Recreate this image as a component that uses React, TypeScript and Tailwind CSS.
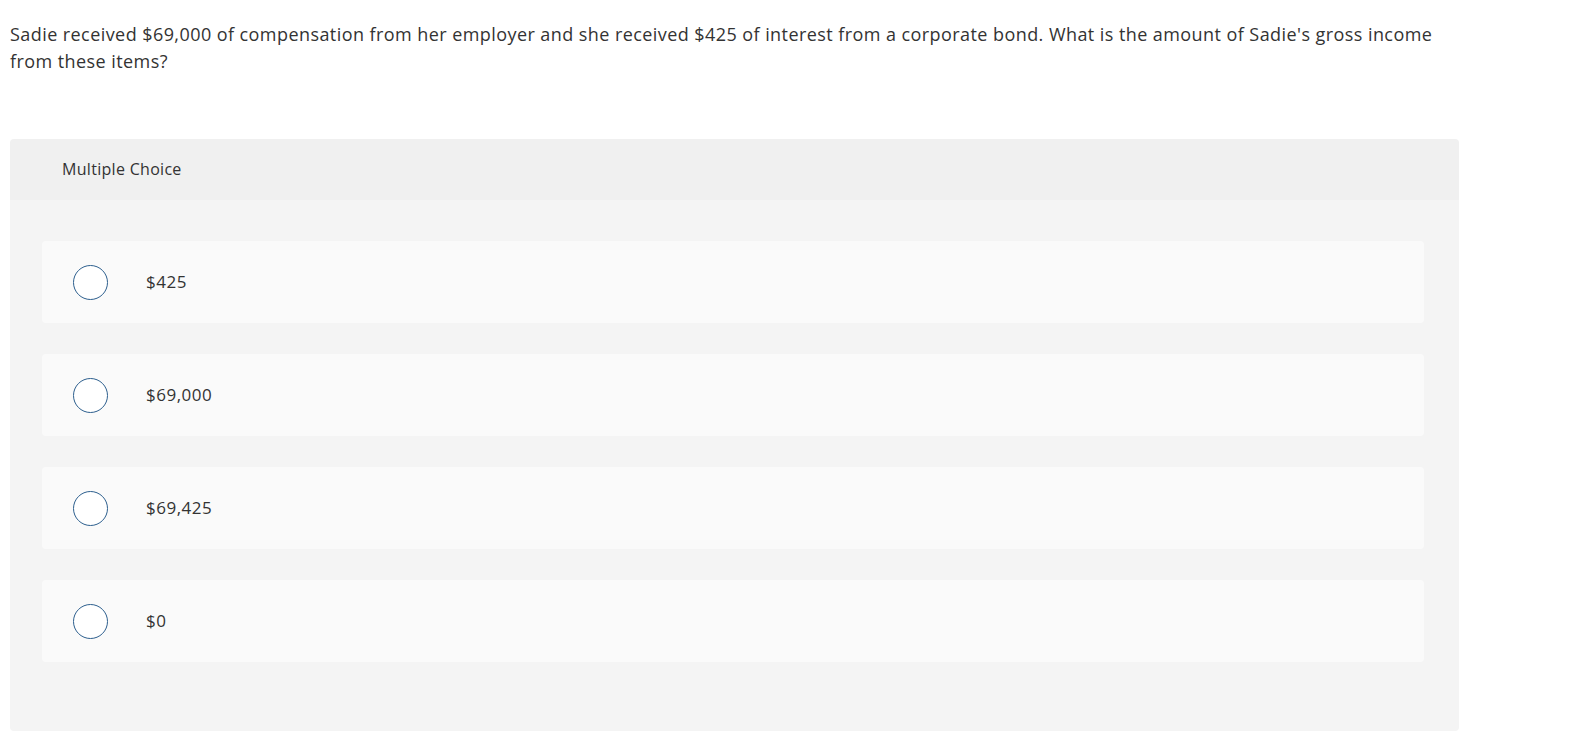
const options = ["$425", "$69,000", "$69,425", "$0"];

export default function App() {
  return (
    <div
      className="min-h-screen bg-white px-[10px] pt-[21px] text-[#333333]"
      style={{ fontFamily: "'Open Sans', Lato, sans-serif" }}
    >
      <p className="w-[1449px] text-[18px] leading-[27px] tracking-[0.43px]">
        Sadie received $69,000 of compensation from her employer and she received $425 of interest from a corporate
        bond. What is the amount of Sadie's gross income
        <br />
        from these items?
      </p>

      <div className="mt-[64px] w-[1449px] overflow-hidden rounded-[4px]">
        <div className="flex h-[61px] items-center bg-[#f0f0f0] pb-[2px] pl-[52px] text-[16px] tracking-[0.3px]">
          Multiple Choice
        </div>
        <div className="flex flex-col gap-[31px] bg-[#f4f4f4] pb-[69px] pl-[32px] pr-[35px] pt-[41px]">
          {options.map((opt) => (
            <div key={opt} className="flex h-[82px] items-center rounded-[4px] bg-[#fafafa] pl-[31px]">
              <span className="h-[35px] w-[35px] shrink-0 rounded-full border-[1.5px] border-[#2d5f8e] bg-white" />
              <span className="ml-[38px] text-[17px] tracking-[0.5px]">{opt}</span>
            </div>
          ))}
        </div>
      </div>
    </div>
  );
}
